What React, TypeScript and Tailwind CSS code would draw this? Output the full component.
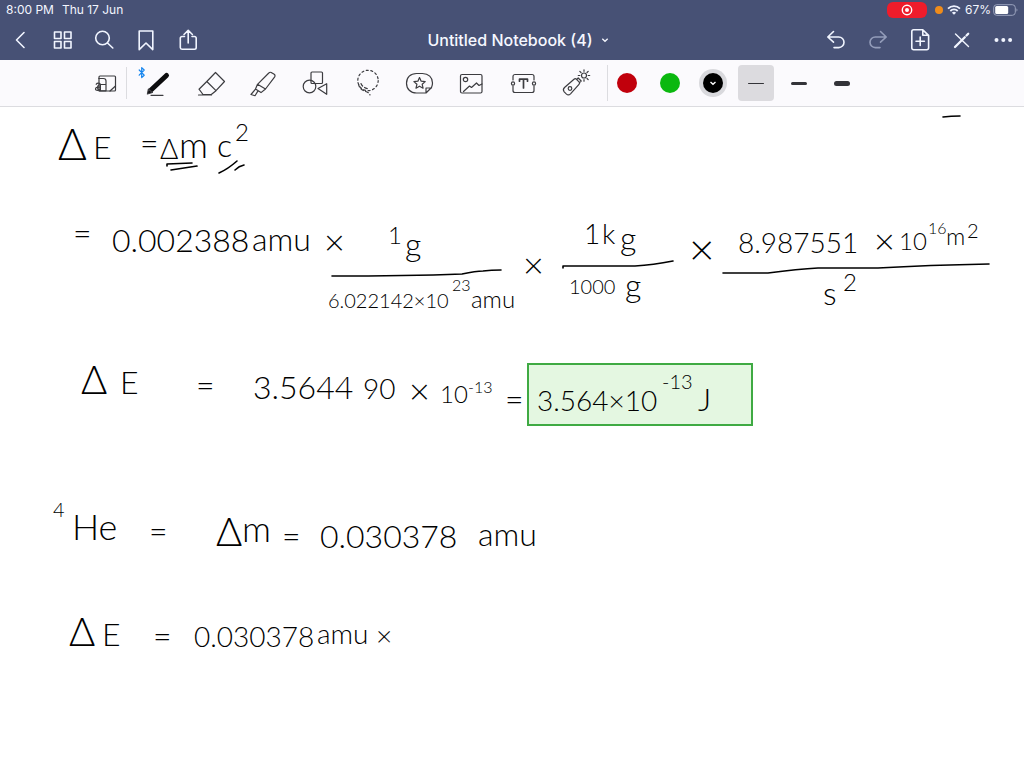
import type { ReactNode } from "react";

type IconProps = { children: ReactNode; className?: string; width?: number };

/* 32 x 32 line icon; the drawing is centred on 16,16 */
function Icon({ children, className = "", width = 1.6 }: IconProps) {
  return (
    <svg
      viewBox="0 0 32 32"
      className={`size-8 shrink-0 overflow-visible ${className}`}
      fill="none"
      stroke="currentColor"
      strokeWidth={width}
      strokeLinecap="round"
      strokeLinejoin="round"
      aria-hidden="true"
    >
      {children}
    </svg>
  );
}

function NavButton({ label, children, faded = false }: { label: string; children: ReactNode; faded?: boolean }) {
  return (
    <button
      type="button"
      aria-label={label}
      disabled={faded}
      className={`flex h-9 w-[42px] items-center justify-center ${faded ? "text-[#949dba]" : "text-[#f1f5ff]"}`}
    >
      <Icon>{children}</Icon>
    </button>
  );
}

function Tool({ label, children }: { label: string; children: ReactNode }) {
  return (
    <button type="button" aria-label={label} className="flex h-10 w-[52px] items-center justify-center text-[#3c3c40]">
      <Icon width={1.2}>{children}</Icon>
    </button>
  );
}

function StatusBar() {
  return (
    <div className="flex h-5 items-center justify-between pr-1.5 pl-1.5 text-[12px] leading-4 font-normal text-[#f3f6ff]">
      <div className="flex gap-2">
        <span>8:00 PM</span>
        <span>Thu 17 Jun</span>
      </div>
      <div className="flex items-center">
        <span className="mr-2 flex h-4 w-10 items-center justify-center rounded-md bg-[#ee1c2b]">
          <svg viewBox="0 0 12 12" className="size-3" fill="none" stroke="#fff" strokeWidth="1.4" aria-hidden="true">
            <circle cx="6" cy="6" r="4.7" />
            <circle cx="6" cy="6" r="2" fill="#fff" stroke="none" />
          </svg>
        </span>
        <span className="mr-1 size-2 rounded-full bg-[#f08c1a]" />
        <svg viewBox="0 0 14 10" className="mr-1 h-2.5 w-3.5" fill="none" stroke="#eef2ff" strokeWidth="1.8" aria-hidden="true">
          <path d="M1 3.6a8.6 8.6 0 0 1 12 0" />
          <path d="M3.3 6a5.3 5.3 0 0 1 7.4 0" />
          <path d="M7 9.8 4.9 7.7a3 3 0 0 1 4.2 0z" fill="#eef2ff" stroke="none" />
        </svg>
        <span>67%</span>
        <svg viewBox="0 0 25 12" className="ml-0.5 h-3 w-[25px]" fill="none" aria-hidden="true">
          <rect x="0.7" y="0.7" width="21.6" height="10.6" rx="3" stroke="#9ba3be" />
          <rect x="2.2" y="2" width="13" height="8" rx="1.5" fill="#fff" />
          <path d="M23.5 4.5c1.2.5 1.2 2.5 0 3z" fill="#9ba3be" />
        </svg>
      </div>
    </div>
  );
}

function NavBar() {
  return (
    <nav className="grid h-10 grid-cols-[1fr_auto_1fr] items-center">
      <div className="flex">
        <NavButton label="Back">
          <path d="M19 8.5 11.5 16l7.5 7.5" />
        </NavButton>
        <NavButton label="Thumbnails">
          <rect x="7.5" y="8" width="6.5" height="6.5" />
          <rect x="17.5" y="8" width="6.5" height="6.5" />
          <rect x="7.5" y="17.5" width="6.5" height="6.5" />
          <rect x="17.5" y="17.5" width="6.5" height="6.5" />
        </NavButton>
        <NavButton label="Search">
          <circle cx="13.5" cy="14" r="6.8" />
          <path d="m18.5 19 5.3 5" />
        </NavButton>
        <NavButton label="Bookmark">
          <path d="M8.2 7h13.6v18.6L15 19l-6.8 6.6z" />
        </NavButton>
        <NavButton label="Share">
          <path d="M11.5 12.5H9a1.7 1.7 0 0 0-1.7 1.7v9.3A1.7 1.7 0 0 0 9 25.2h12.5a1.7 1.7 0 0 0 1.7-1.7v-9.3a1.7 1.7 0 0 0-1.7-1.7H19M15.2 19V6.5M11 10.5l4.2-4.2 4.2 4.2" />
        </NavButton>
      </div>
      <button type="button" className="flex items-center gap-2 pl-3 text-[16px] leading-6 font-medium text-[#f6f8ff]">
        Untitled Notebook (4)
        <svg viewBox="0 0 8 8" className="size-2" fill="none" stroke="currentColor" strokeWidth="1.3" aria-hidden="true">
          <path d="m1.3 2.7 2.7 2.6 2.7-2.6" />
        </svg>
      </button>
      <div className="flex justify-end">
        <NavButton label="Undo">
          <path d="M14.5 7.5 8.8 13l5.7 5.2M9 13h10.7a5.3 5.3 0 0 1 0 10.6H15" />
        </NavButton>
        <NavButton label="Redo" faded>
          <path d="m19.5 7.5 5.7 5.5-5.7 5.2M25 13H14.3a5.3 5.3 0 0 0 0 10.6H19" />
        </NavButton>
        <NavButton label="Add page">
          <path d="M19.8 5.8h-9.2a1.8 1.8 0 0 0-1.8 1.8v16.3a1.8 1.8 0 0 0 1.8 1.8h13.2a1.8 1.8 0 0 0 1.8-1.8V11.3zM19.8 5.8v5.5h5.8M17.2 13v8.4M13 17.2h8.4" />
        </NavButton>
        <NavButton label="Read-only mode">
          <path d="m10.5 10 13 12.5" strokeWidth="1.4" />
          <path d="m10 23 9.800-9.800" strokeWidth="2.3" />
          <path d="m21.5 11.500 1.700-1.700" strokeWidth="2.3" />
        </NavButton>
        <NavButton label="More">
          <g fill="currentColor" stroke="none">
            <circle cx="9.5" cy="16" r="2" />
            <circle cx="16.3" cy="16" r="2" />
            <circle cx="23.1" cy="16" r="2" />
          </g>
        </NavButton>
      </div>
    </nav>
  );
}

const swatches = [
  { name: "Red", dot: "bg-[#c1000c]" },
  { name: "Green", dot: "bg-[#0bb80f]" },
];

function Toolbar() {
  return (
    <div className="flex h-[47px] items-center border-b border-[#dcdce0] bg-[#fbfafd] pl-[84px]">
      <button type="button" aria-label="Zoom window" className="flex h-10 w-[42px] items-center justify-center text-[#3c3c40]">
        <Icon width={1.2}>
          <rect x="10" y="9" width="16.5" height="15" rx="1" />
          <path d="M9.8 11.5h4.7a2.5 2.5 0 0 1 2.5 2.5v9.8H10M17 17.5h-5.3a3 3 0 0 0 0 6.2" />
          <path d="M7.2 17.3c.8-1.5 4-1.7 4.2.4v5.8M11.3 19.8c-2.2 0-4.8.1-4.8 2.1s3.8 2 4.8-.2M21 24l5.5-5" />
        </Icon>
      </button>
      <span className="h-8 w-px bg-[#dcdce0]" />
      <div className="ml-1.5 flex">
        <Tool label="Pen">
          <path d="m8 23 15.5-14.5" stroke="#0c0c0e" strokeWidth="5" />
          <path d="m4.4 27 1-5 4 3.5z" fill="#0c0c0e" />
          <path d="M8 28.3h12" />
          <path d="m-3.8 3 5 5.2-2.5 2.4V.6l2.5 2.4-5 5.2" stroke="#1685ee" />
        </Tool>
        <Tool label="Eraser">
          <path d="m20.5 5.5 9 9-8.5 9.2-9.2-9.2zM11.8 14.5 4 22.2l4 5.3h8.3l4.7-3.8M3.5 28h13" />
        </Tool>
        <Tool label="Highlighter">
          <path d="m24.2 5.5 3 1.8q1.3 1 .5 2.5L18.5 22l-8-4.7L21.8 6q1.1-1.2 2.4-.5zM10.5 17.3l-2 4.8 5.5 3.500 4.500-3.600M8.500 22.100 4 27.500l4 1.200 3-4.800" />
        </Tool>
        <Tool label="Shapes">
          <rect x="12" y="5" width="11.5" height="11.5" rx="1" />
          <circle cx="10.5" cy="19.5" r="6.3" />
          <path d="m19 21.5 8.7-4.8v10.6z" />
        </Tool>
        <Tool label="Lasso">
          <circle cx="17" cy="13.5" r="10.2" strokeDasharray="2 2.6" />
          <path d="M10 16.5c1 3 4.5 5 8.500 5.500M7.500 17c.5 4 4 6.500 7 7.500 2 .6 4 1.500 4.500 3.500" strokeDasharray="3 2.400" />
        </Tool>
        <Tool label="Elements">
          <path d="M13.5 6.5h6c6 0 10 4 10 9.500 0 1.800-.3 3-1 4.500l-5.500 5.500h-9.500c-6 0-10-4-10-9.800s4-9.700 10-9.700zM23 26v-5h5.500" />
          <path d="m16.500 10.500 1.700 3.700 4 .4-3 2.700.9 3.900-3.600-2-3.500 2 .9-3.900-3-2.700 4-.4z" />
        </Tool>
        <Tool label="Image">
          <rect x="5.5" y="7.5" width="21.5" height="18.5" rx="1.5" />
          <circle cx="10.5" cy="12.5" r="2.2" />
          <path d="m8.500 24.500 6-5.500 2 1.500 5-4.500 2.500 2.500 3-1.500" />
        </Tool>
        <Tool label="Text box">
          <path d="M6 13V9.500a2 2 0 0 1 2-2h17a2 2 0 0 1 2 2V13M6 19v4.500a2 2 0 0 0 2 2h17a2 2 0 0 0 2-2V19" />
          <circle cx="6" cy="16.5" r="1.6" />
          <circle cx="27" cy="16.5" r="1.6" />
          <path d="M12.500 14.200v-2h8v2M16.500 12.200V21" strokeWidth="1.7" />
        </Tool>
        <Tool label="Laser pointer">
          <path d="m5.500 20.500 9.500-8.300q1.300-1 2.500.1l2.500 2.500q1.200 1.200 0 2.500l-8.500 9.500q-2 2-4 .3l-2.300-2.300q-1.800-2.300.3-4.300zM17.700 12.500l1.500-1.500 3 3-1.700 1.700" />
          <circle cx="11" cy="21.5" r="1.8" />
          <circle cx="25" cy="8.5" r="2.5" />
          <path d="M25 4.300V2.800M29.200 8.500h1.500M28 5.500l1.200-1.200M22 5.500l-1.200-1.200M28 11.500l1.200 1.200M25 12.700v1.500M20.800 8.500h-1.500" />
        </Tool>
      </div>
      <span className="ml-1.5 h-9 w-px bg-[#dcdce0]" />
      <div className="ml-px flex items-center gap-[7px]">
        {swatches.map((s) => (
          <button key={s.name} type="button" aria-label={s.name} className="flex size-9 items-center justify-center">
            <span className={`size-5 rounded-full ${s.dot}`} />
          </button>
        ))}
        <button type="button" aria-label="Black" className="flex size-9 items-center justify-center">
          <span className="flex size-7 items-center justify-center rounded-full bg-[#d9d9dd]">
            <span className="flex size-5 items-center justify-center rounded-full bg-black">
              <svg viewBox="0 0 8 8" className="size-2" fill="none" stroke="#fff" strokeWidth="1.4" aria-hidden="true">
                <path d="m1.5 3 2.5 2.2L6.5 3" />
              </svg>
            </span>
          </span>
        </button>
        <button type="button" aria-label="Thin stroke" aria-pressed="true" className="flex size-9 items-center justify-center rounded bg-[#dcdbdf]">
          <span className="h-px w-4 rounded-full bg-[#333338]" />
        </button>
        <button type="button" aria-label="Medium stroke" className="flex size-9 items-center justify-center">
          <span className="h-[3px] w-4 rounded-full bg-[#333338]" />
        </button>
        <button type="button" aria-label="Thick stroke" className="flex size-9 items-center justify-center">
          <span className="h-[5px] w-4 rounded-full bg-[#333338]" />
        </button>
      </div>
    </div>
  );
}

/* A note on the sheet: left edge, baseline, size, characters */
type Note = [x: number, baseline: number, size: number, text: string];

const lines: Note[][] = [
  [
    [58, 53, 44, "Δ"], [93, 52, 32, "E"], [140, 48, 32, "="], [160, 52, 28, "Δ"],
    [179, 51, 36, "m"], [217, 50, 32, "c"], [235, 34, 24, "2"],
  ],
  [
    [73, 138, 32, "="], [112, 145, 32, "0.002388"], [252, 144, 32, "amu"], [324, 148, 36, "×"],
    [388, 137, 24, "1"], [405, 149, 32, "g"], [328, 201, 20, "6.022142×10"], [452, 184, 16, "23"],
    [471, 201, 24, "amu"], [523, 171, 36, "×"], [584, 137, 28, "1"], [602, 137, 28, "k"],
    [620, 143, 32, "g"], [569, 187, 20, "1000"], [625, 190, 32, "g"], [689, 158, 44, "×"],
    [738, 146, 28, "8.987551"], [874, 147, 36, "×"], [899, 143, 24, "10"], [928, 127, 16, "16"],
    [946, 138, 24, "m"], [967, 131, 20, "2"], [823, 198, 32, "s"], [843, 184, 24, "2"],
  ],
  [
    [81, 287, 40, "Δ"], [120, 287, 32, "E"], [196, 290, 32, "="], [253, 292, 32, "3.5644"],
    [363, 292, 28, "90"], [409, 297, 36, "×"], [440, 296, 24, "10"], [468, 286, 16, "-13"],
    [505, 304, 32, "="], [537, 304, 28, "3.564×10"], [662, 282, 20, "-13"], [698, 304, 32, "J"],
  ],
  [
    [53, 410, 20, "4"], [72, 433, 36, "He"], [149, 436, 32, "="], [216, 439, 40, "Δ"],
    [242, 435, 36, "m"], [282, 441, 32, "="], [320, 441, 32, "0.030378"], [478, 439, 32, "amu"],
  ],
  [
    [69, 539, 40, "Δ"], [102, 539, 32, "E"], [153, 541, 32, "="], [194, 540, 28, "0.030378"],
    [317, 537, 28, "amu"], [376, 539, 28, "×"],
  ],
];

/* distance from the top of a line box to its baseline, per pixel of size */
const ASCENT = 0.887;

function Sheet() {
  return (
    <main className="relative flex-1 overflow-hidden bg-white font-['Lato','DejaVu_Sans',sans-serif] font-light text-black">
      <div className="absolute top-[256px] left-[527px] h-[63px] w-[226px] border-2 border-[#3faa43] bg-[#e4f7e1]" />
      {lines.map((line, row) => (
        <p key={row}>
          {line.map(([x, baseline, size, text]) => (
            <span
              key={x}
              className="absolute leading-none whitespace-nowrap"
              style={{ left: x, top: Math.round(baseline - size * ASCENT), fontSize: size }}
            >
              {text}
            </span>
          ))}
        </p>
      ))}
      {/* fraction bars and underlines */}
      <svg
        viewBox="0 0 1024 600"
        className="absolute top-0 left-0 h-[600px] w-[1024px]"
        fill="none"
        stroke="#000"
        strokeWidth="1.6"
        strokeLinecap="round"
        strokeLinejoin="round"
        aria-hidden="true"
      >
        <path d="M943 10q8-1 17-1" />
        <path d="M167 59v-2l25-1M171 63l26-4M219 66q9-4 18-12M235 63q4-4 9-5" />
        <path d="M332 169q75 0 130-2 14-3 21-3 8-1 18-1" />
        <path d="M563 161v-2h72q18-1 38-5" />
        <path d="M723 166h45q30-4 50-5h60q50-3 111-4" />
      </svg>
    </main>
  );
}

export default function App() {
  return (
    <div className="flex min-h-screen flex-col font-['Inter',sans-serif]">
      <header>
        <div className="bg-[#475175]">
          <StatusBar />
          <NavBar />
        </div>
        <Toolbar />
      </header>
      <Sheet />
    </div>
  );
}
